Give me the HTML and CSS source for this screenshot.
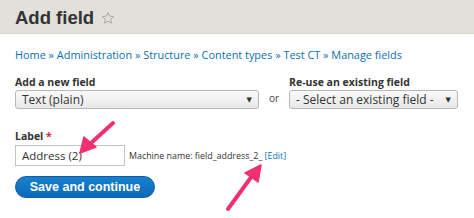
FILE: index.html
```html
<!DOCTYPE html>
<html lang="en">
<head>
    <meta charset="UTF-8">
    <title>Add field</title>
    <link rel="stylesheet" href="styles.css">
</head>
<body>
    <div class="page-title">
        <h1>Add field</h1>
        <svg class="star" width="14" height="14" viewBox="0 0 24 24">
            <path d="M12 2.5l2.9 6.3 6.8.7-5.1 4.6 1.5 6.8L12 17.4l-6.1 3.5 1.5-6.8-5.1-4.6 6.8-.7z" fill="none" stroke="#a9a89f" stroke-width="1.6" stroke-linejoin="round"/>
        </svg>
    </div>

    <div class="content">
        <div class="breadcrumb">
            <a href="#">Home</a> » <a href="#">Administration</a> » <a href="#">Structure</a> » <a href="#">Content types</a> » <a href="#">Test CT</a> » <a href="#">Manage fields</a>
        </div>

        <div class="add-row">
            <div class="form-item">
                <label>Add a new field</label>
                <div class="select wide">Text (plain)<span class="caret">▼</span></div>
            </div>
            <div class="or">or</div>
            <div class="form-item">
                <label>Re-use an existing field</label>
                <div class="select narrow">- Select an existing field -<span class="caret">▼</span></div>
            </div>
        </div>

        <div class="form-item label-item">
            <label>Label <span class="req">*</span></label>
            <div class="label-row">
                <div class="text-input">Address (2)</div>
                <span class="machine">Machine name: field_address_2_ <a href="#">[Edit]</a></span>
            </div>
        </div>

        <button class="btn">Save and continue</button>
    </div>

    <!-- annotation arrows -->
    <svg class="arrows" width="474" height="218" viewBox="0 0 474 218">
        <g fill="#f0316f" stroke="#f0316f" stroke-linecap="round">
            <line x1="113" y1="123" x2="90" y2="144" stroke-width="4"/>
            <polygon points="80,153 84,137 96,147" stroke-width="1.5" stroke-linejoin="round"/>
            <line x1="228" y1="209" x2="252" y2="176" stroke-width="4"/>
            <polygon points="261,165 245,173 258,182" stroke-width="1.5" stroke-linejoin="round"/>
        </g>
    </svg>
</body>
</html>
```

FILE: styles.css
```css
body {
    margin: 0;
    font-family: "Open Sans", "DejaVu Sans", sans-serif;
    color: #222;
    background: #fff;
    position: relative;
    width: 474px;
    height: 218px;
    overflow: hidden;
}
a {
    color: #0a6fb4;
    text-decoration: none;
}
.page-title {
    display: flex;
    align-items: center;
    height: 34px;
    padding-left: 15px;
    background: #e1e0da;
    border-bottom: 1px solid #d6d5cf;
    box-sizing: border-box;
}
.page-title h1 {
    margin: 0;
    font-family: "Liberation Sans", Arial, sans-serif;
    font-size: 18.5px;
    font-weight: bold;
    color: #333;
    margin-top: 2px;
}
.star {
    margin-left: 7px;
    margin-top: 2px;
}
.content {
    padding: 0 15px;
}
.breadcrumb {
    margin-top: 13px;
    font-size: 10.9px;
    color: #0a6fb4;
    white-space: nowrap;
}
.add-row {
    display: flex;
    align-items: flex-end;
    margin-top: 13px;
}
.form-item label {
    display: block;
    font-size: 10.5px;
    font-weight: bold;
    color: #333;
    margin-bottom: 1px;
}
.select {
    position: relative;
    height: 19px;
    box-sizing: border-box;
    border: 1px solid #b8b8b8;
    border-radius: 3px;
    background: linear-gradient(#fafafa, #e8e8e8);
    font-size: 12px;
    line-height: 17px;
    padding-left: 6px;
    color: #333;
    white-space: nowrap;
}
.select.wide {
    width: 244px;
}
.select.narrow {
    width: 169px;
}
.caret {
    position: absolute;
    right: 6px;
    top: 0;
    font-size: 7px;
    color: #333;
}
.or {
    width: 30px;
    text-align: center;
    font-size: 10px;
    color: #444;
    padding-bottom: 4px;
}
.label-item {
    margin-top: 20px;
}
.req {
    color: #e0262b;
}
.label-row {
    display: flex;
    align-items: center;
    margin-top: 2px;
}
.text-input {
    width: 110px;
    height: 21px;
    box-sizing: border-box;
    border: 1px solid #c4c4c4;
    font-size: 11.5px;
    line-height: 19px;
    padding-left: 6px;
    color: #333;
}
.machine {
    margin-left: 4px;
    font-size: 8.9px;
    color: #333;
}
.btn {
    display: block;
    margin-top: 10px;
    width: 140px;
    height: 22px;
    border: 1px solid #0d5fa3;
    border-radius: 11px;
    background: linear-gradient(#1a7fcf, #0a6ab8);
    color: #fff;
    font-family: "Liberation Sans", Arial, sans-serif;
    font-size: 12.5px;
    font-weight: bold;
    padding: 0;
}
.arrows {
    position: absolute;
    left: 0;
    top: 0;
    pointer-events: none;
}
```
